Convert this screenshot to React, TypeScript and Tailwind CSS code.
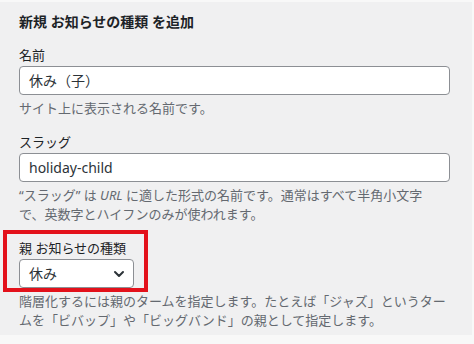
const FONT = 'font-["Noto_Sans","Noto_Sans_CJK_JP",sans-serif]';

function FieldLabel({ children }: { children: React.ReactNode }) {
	return <label className="block text-[13px] leading-[20px] text-[#1d2327]">{children}</label>;
}

function Help({ children }: { children: React.ReactNode }) {
	return <p className="mt-[4px] whitespace-nowrap text-[13px] leading-[19px] text-[#646970]">{children}</p>;
}

function TextBox({ value }: { value: string }) {
	return (
		<div className="mt-px flex h-[29px] w-[431px] items-center rounded-[4px] border border-[#8c8f94] bg-white px-[9px] text-[14px] text-[#2c3338]">
			{value}
		</div>
	);
}

export default function App() {
	return (
		<div className={`h-[344px] w-[474px] bg-[#f8f8f8] pt-[2px] ${FONT}`}>
			<div className="h-[333px] w-[472px] bg-[#f0f0f1] pl-[19px] pt-[10px]">
				<h2 className="text-[14px] font-bold leading-[20px] text-[#1d2327]">新規 お知らせの種類 を追加</h2>

				<div className="mt-[13px]">
					<FieldLabel>名前</FieldLabel>
					<TextBox value="休み（子）" />
					<Help>サイト上に表示される名前です。</Help>
				</div>

				<div className="mt-[14px]">
					<FieldLabel>スラッグ</FieldLabel>
					<TextBox value="holiday-child" />
					<Help>
						“スラッグ” は <i>URL</i> に適した形式の名前です。通常はすべて半角小文字
						<br />
						で、英数字とハイフンのみが使われます。
					</Help>
				</div>

				<div className="relative mt-[14px]">
					<FieldLabel>親 お知らせの種類</FieldLabel>
					<div className="mt-px flex h-[29px] w-[115px] items-center justify-between rounded-[4px] border border-[#8c8f94] bg-white pl-[9px] pr-[6px] text-[14px] text-[#2c3338]">
						<span>休み</span>
						<svg width="16" height="16" viewBox="0 0 16 16" fill="none">
							<path d="M4 6l4 4 4-4" stroke="#2c3338" strokeWidth="2" strokeLinecap="round" strokeLinejoin="round" />
						</svg>
					</div>
					<Help>
						階層化するには親のタームを指定します。たとえば「ジャズ」というター
						<br />
						ムを「ビバップ」や「ビッグバンド」の親として指定します。
					</Help>
					<div className="pointer-events-none absolute left-[-16px] top-[-8px] h-[62px] w-[145px] border-4 border-[#e3111b]" />
				</div>
			</div>
		</div>
	);
}
